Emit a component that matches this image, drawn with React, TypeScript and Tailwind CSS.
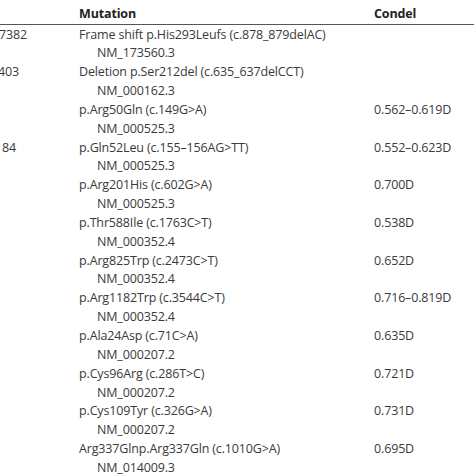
const rows: [string, string, string, boolean][] = [
  ["7382", "Frame shift p.His293Leufs (c.878_879delAC)", "", false],
  ["", "NM_173560.3", "", true],
  ["403", "Deletion p.Ser212del (c.635_637delCCT)", "", false],
  ["", "NM_000162.3", "", true],
  ["", "p.Arg50Gln (c.149G>A)", "0.562–0.619D", false],
  ["", "NM_000525.3", "", true],
  ["84", "p.Gln52Leu (c.155–156AG>TT)", "0.552–0.623D", false],
  ["", "NM_000525.3", "", true],
  ["", "p.Arg201His (c.602G>A)", "0.700D", false],
  ["", "NM_000525.3", "", true],
  ["", "p.Thr588Ile (c.1763C>T)", "0.538D", false],
  ["", "NM_000352.4", "", true],
  ["", "p.Arg825Trp (c.2473C>T)", "0.652D", false],
  ["", "NM_000352.4", "", true],
  ["", "p.Arg1182Trp (c.3544C>T)", "0.716–0.819D", false],
  ["", "NM_000352.4", "", true],
  ["", "p.Ala24Asp (c.71C>A)", "0.635D", false],
  ["", "NM_000207.2", "", true],
  ["", "p.Cys96Arg (c.286T>C)", "0.721D", false],
  ["", "NM_000207.2", "", true],
  ["", "p.Cys109Tyr (c.326G>A)", "0.731D", false],
  ["", "NM_000207.2", "", true],
  ["", "Arg337Glnp.Arg337Gln (c.1010G>A)", "0.695D", false],
  ["", "NM_014009.3", "", true],
]

export default function App() {
  return (
    <div
      className="w-[474px] h-[474px] overflow-hidden bg-white text-[#3a3a3a] text-[12.5px] tracking-[-0.15px]"
      style={{ fontFamily: '"Open Sans", "Noto Sans", sans-serif' }}
    >
      {/* header */}
      <div className="grid grid-cols-[79px_295px_1fr] h-[24.5px] pt-[5px] leading-[18px] font-bold text-[#222] border-b-[1.5px] border-[#555]">
        <div />
        <div>Mutation</div>
        <div>Condel</div>
      </div>

      {/* body */}
      <div className="pt-[1px]">
        {rows.map(([id, mut, condel, sub], i) => (
          <div key={i} className="grid grid-cols-[79px_295px_1fr] h-[18.85px] leading-[18.85px] whitespace-nowrap">
            <div className={id === "403" ? "-ml-[2px]" : id === "84" ? "pl-[2px]" : "-ml-[1px]"}>{id}</div>
            <div className={sub ? "pl-[18px]" : ""}>{mut}</div>
            <div>{condel}</div>
          </div>
        ))}
      </div>
    </div>
  )
}
